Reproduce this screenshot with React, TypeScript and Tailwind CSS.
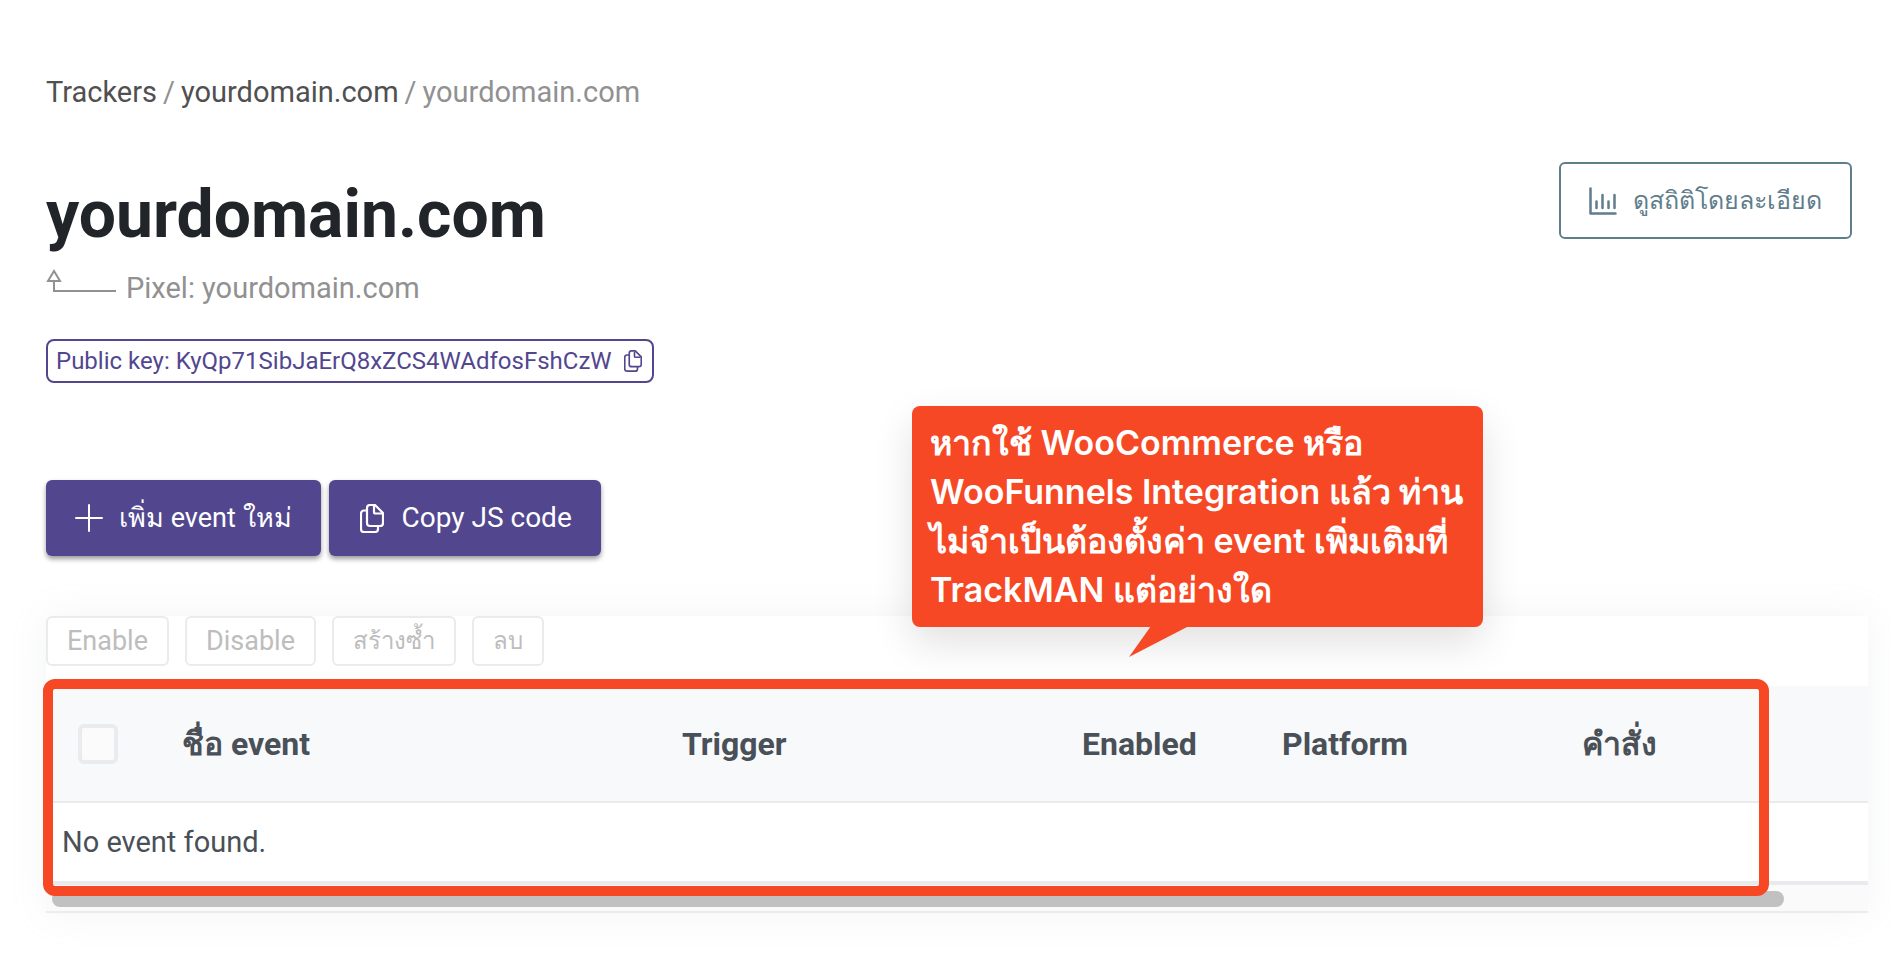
import type { ReactNode } from "react";

const columns = [
  { label: "ชื่อ event", width: "w-[500px]" },
  { label: "Trigger", width: "w-[400px]" },
  { label: "Enabled", width: "w-[200px]" },
  { label: "Platform", width: "w-[300px]" },
  { label: "คำสั่ง", width: "" },
];

const bulkActions = [
  { label: "Enable", size: "text-[27px]" },
  { label: "Disable", size: "text-[27px]" },
  { label: "สร้างซ้ำ", size: "text-[24px]" },
  { label: "ลบ", size: "text-[24px]" },
];

function CopyIcon({ className }: { className: string }) {
  return (
    <svg
      className={className}
      viewBox="0 0 24 29"
      fill="none"
      stroke="currentColor"
      strokeWidth="2.200"
      strokeLinejoin="round"
      aria-hidden="true"
    >
      <path d="M15 1h-5a3 3 0 0 0-3 3v15a3 3 0 0 0 3 3h10a3 3 0 0 0 3-3V9z" />
      <path d="M14 2v6a1.500 1.500 0 0 0 1.500 1.500H22" />
      <path d="M7 6.500H4a3 3 0 0 0-3 3V25a3 3 0 0 0 3 3h11a3 3 0 0 0 3-3v-3" />
    </svg>
  );
}

function ChartIcon() {
  return (
    <svg
      className="h-7 w-7"
      viewBox="0 0 28 28"
      fill="none"
      stroke="currentColor"
      strokeWidth="2.500"
      strokeLinecap="round"
      strokeLinejoin="round"
      aria-hidden="true"
    >
      <path d="M1.500 1.500v25h25" />
      <path d="M7.500 14.500v6.500M13.500 8v13M19.500 14.500v6.500M25.500 8v13" />
    </svg>
  );
}

function PlusIcon() {
  return (
    <svg
      className="h-7 w-7"
      viewBox="0 0 28 28"
      stroke="currentColor"
      strokeWidth="2"
      strokeLinecap="round"
      aria-hidden="true"
    >
      <path d="M14 1v26M1 14h26" />
    </svg>
  );
}

function PrimaryButton({
  icon,
  size,
  children,
}: {
  icon: ReactNode;
  size: string;
  children: ReactNode;
}) {
  return (
    <button
      type="button"
      className={`${size} flex h-[76px] items-center gap-4 rounded-md bg-[#52478f] px-[29px] leading-10 text-white shadow-[0_3px_5px_rgba(0,0,0,0.4)]`}
    >
      <span className="flex w-7 justify-center">{icon}</span>
      {children}
    </button>
  );
}

function EventTable() {
  return (
    <table className="w-full table-fixed border-collapse text-left text-[#495057]">
      <thead className="bg-[#f8f9fb]">
        <tr className="h-[116px] border-b-2 border-[#e9ebee]">
          <th className="w-[120px] pl-8">
            <input
              type="checkbox"
              aria-label="Select all events"
              className="block h-10 w-10 appearance-none rounded-md border-4 border-[#e9ecee] bg-[#fbfbfb]"
            />
          </th>
          {columns.map((column) => (
            <th
              key={column.label}
              className={`${column.width} px-4 text-[32px] leading-10 font-bold`}
            >
              {column.label}
            </th>
          ))}
        </tr>
      </thead>
      <tbody>
        <tr className="h-[81px] border-b-4 border-[#e9eaed]">
          <td colSpan={6} className="px-4 text-[29px] leading-10">
            No event found.
          </td>
        </tr>
      </tbody>
    </table>
  );
}

function Callout() {
  return (
    <div className="absolute -top-[210px] left-[866px] w-[571px] rounded-lg bg-[#f64825] px-[18px] pt-3 pb-[13px] font-['Inter',sans-serif] text-[34px] leading-[49px] font-semibold text-white shadow-[0_16px_40px_rgba(0,0,0,0.12)]">
      <p>
        หากใช้ WooCommerce หรือ
        <br />
        WooFunnels Integration แล้ว ท่าน
        <br />
        ไม่จำเป็นต้องตั้งค่า event เพิ่มเติมที่
        <br />
        TrackMAN แต่อย่างใด
      </p>
      <svg
        className="absolute top-full left-[217px] h-[30px] w-[60px]"
        viewBox="0 0 60 30"
        fill="#f64825"
        aria-hidden="true"
      >
        <path d="M22 -1L0 30L60 -1z" />
      </svg>
    </div>
  );
}

export default function App() {
  return (
    <main className="min-h-screen overflow-hidden bg-white pt-[72px] pr-[22px] pb-[51px] pl-[46px] font-['Roboto',sans-serif] whitespace-nowrap">
      <nav className="flex gap-[6px] text-[29px] leading-10 text-[#919191]">
        <a href="#trackers" className="text-[#505050]">
          Trackers
        </a>
        <span>/</span>
        <a href="#domain" className="text-[#505050]">
          yourdomain.com
        </a>
        <span>/</span>
        <span>yourdomain.com</span>
      </nav>

      <header className="mt-[50px] flex items-start justify-between pr-4">
        <div>
          <h1 className="mt-[13px] text-[66px] leading-20 font-bold text-[#212529]">
            yourdomain.com
          </h1>
          <p className="mt-[13px] flex gap-[10px] text-[29px] leading-10 text-[#919191]">
            <svg
              className="h-6 w-[70px]"
              viewBox="0 0 70 24"
              fill="none"
              stroke="currentColor"
              strokeWidth="2"
              aria-hidden="true"
            >
              <path d="M8 12v11h62M8 3L2 13h12z" />
            </svg>
            Pixel: yourdomain.com
          </p>
          <button
            type="button"
            className="mt-[31px] flex h-11 items-center gap-3 rounded-lg border-2 border-[#52478f] pr-[10px] pl-2 text-[24px] leading-8 text-[#52478f]"
          >
            Public key: KyQp71SibJaErQ8xZCS4WAdfosFshCzW
            <CopyIcon className="h-[22px] w-[18px]" />
          </button>
        </div>
        <button
          type="button"
          className="flex h-[77px] items-center gap-4 rounded-md border-2 border-[#5f7d8c] px-7 text-[25px] leading-10 text-[#5f7d8c]"
        >
          <ChartIcon />
          ดูสถิติโดยละเอียด
        </button>
      </header>

      <div className="mt-[97px] flex gap-2">
        <PrimaryButton icon={<PlusIcon />} size="text-[27px]">
          เพิ่ม event ใหม่
        </PrimaryButton>
        <PrimaryButton icon={<CopyIcon className="h-[29px] w-6" />} size="text-[28px]">
          Copy JS code
        </PrimaryButton>
      </div>

      <section className="relative mt-[60px] shadow-[0_0_35px_rgba(154,161,171,0.12)]">
        <div className="flex gap-4 pb-5">
          {bulkActions.map((action) => (
            <button
              key={action.label}
              type="button"
              disabled
              className={`${action.size} h-[50px] rounded-md border-2 border-[#ebebeb] px-[19px] leading-8 text-[#bdbdbd]`}
            >
              {action.label}
            </button>
          ))}
        </div>
        <div className="relative">
          <EventTable />
          <div className="border-b-2 border-[#ececec] bg-[#fafafa] pt-[6px] pr-[84px] pb-1 pl-[6px]">
            <div className="h-4 rounded-full bg-[#c1c1c1]" />
          </div>
          <div className="pointer-events-none absolute -top-[7px] right-[99px] bottom-[17px] -left-[3px] rounded-xl border-10 border-[#f64825]" />
        </div>
        <Callout />
      </section>
    </main>
  );
}
